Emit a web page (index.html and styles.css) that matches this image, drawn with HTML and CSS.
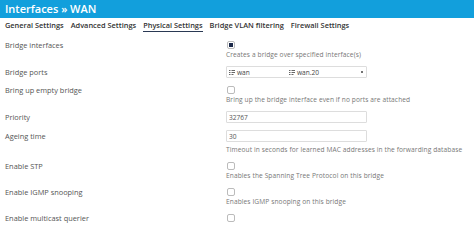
FILE: index.html
```html
<!DOCTYPE html>
<html lang="en">
<head>
    <meta charset="UTF-8">
    <meta name="viewport" content="width=device-width, initial-scale=1.0">
    <title>Interfaces » WAN</title>
    <link rel="stylesheet" href="styles.css">
</head>
<body>
    <div class="title-bar">Interfaces » WAN</div>

    <nav class="tabs">
        <span class="tab">General Settings</span>
        <span class="tab">Advanced Settings</span>
        <span class="tab active">Physical Settings</span>
        <span class="tab">Bridge VLAN filtering</span>
        <span class="tab">Firewall Settings</span>
    </nav>

    <form class="settings">
        <div class="field check-row">
            <label class="label">Bridge interfaces</label>
            <span class="checkbox checked"></span>
            <div class="desc">Creates a bridge over specified interface(s)</div>
        </div>

        <div class="field input-row">
            <label class="label">Bridge ports</label>
            <div class="multi">
                <span class="chip"><svg width="6" height="5" viewBox="0 0 6 5"><path d="M0 0.5h1.5M2.5 0.5h3.5M0 2.5h1.5M2.5 2.5h3.5M0 4.5h1.5M2.5 4.5h2" stroke="#666" stroke-width="1"/></svg>wan</span>
                <span class="chip"><svg width="6" height="5" viewBox="0 0 6 5"><path d="M0 0.5h1.5M2.5 0.5h3.5M0 2.5h1.5M2.5 2.5h3.5M0 4.5h1.5M2.5 4.5h2" stroke="#666" stroke-width="1"/></svg>wan.20</span>
                <span class="caret"></span>
            </div>
        </div>

        <div class="field check-row">
            <label class="label">Bring up empty bridge</label>
            <span class="checkbox"></span>
            <div class="desc">Bring up the bridge interface even if no ports are attached</div>
        </div>

        <div class="field input-row">
            <label class="label">Priority</label>
            <input class="text" type="text" value="32767">
        </div>

        <div class="field input-row">
            <label class="label">Ageing time</label>
            <input class="text" type="text" value="30">
            <div class="desc">Timeout in seconds for learned MAC addresses in the forwarding database</div>
        </div>

        <div class="field check-row">
            <label class="label">Enable STP</label>
            <span class="checkbox"></span>
            <div class="desc">Enables the Spanning Tree Protocol on this bridge</div>
        </div>

        <div class="field check-row">
            <label class="label">Enable IGMP snooping</label>
            <span class="checkbox"></span>
            <div class="desc">Enables IGMP snooping on this bridge</div>
        </div>

        <div class="field check-row">
            <label class="label">Enable multicast querier</label>
            <span class="checkbox"></span>
        </div>
    </form>
</body>
</html>
```

FILE: styles.css
```css
body {
    margin: 0;
    font-family: "Open Sans", "DejaVu Sans", sans-serif;
    color: #444;
    background: #fff;
}
.title-bar {
    height: 18px;
    line-height: 18px;
    padding-left: 5px;
    background-color: #129fdc;
    color: #fff;
    font-size: 11px;
    font-weight: 600;
}
.tabs {
    display: flex;
    gap: 7px;
    padding: 2px 5px 0;
    height: 12px;
}
.tab {
    font-size: 7.4px;
    font-weight: 600;
    color: #333;
    line-height: 10px;
    white-space: nowrap;
}
.tab.active {
    border-bottom: 1px solid #2a3954;
}
.settings {
    padding: 8px 0 0 5px;
}
.field {
    display: grid;
    grid-template-columns: 221px 1fr;
    align-items: center;
    margin-bottom: 7px;
}
.check-row {
    grid-template-rows: 10px auto;
}
.input-row {
    grid-template-rows: 12px auto;
}
.label {
    font-size: 7.4px;
    line-height: 8px;
    color: #555;
    white-space: nowrap;
}
.desc {
    grid-column: 2;
    font-size: 6.6px;
    letter-spacing: 0.1px;
    color: #777;
    line-height: 9px;
    white-space: nowrap;
}
.input-row .desc {
    margin-top: 3px;
}
.checkbox {
    display: block;
    box-sizing: border-box;
    width: 8px;
    height: 8px;
    margin-left: 1px;
    border: 1px solid #bbb;
    border-radius: 2px;
    position: relative;
}
.checkbox.checked::after {
    content: "";
    position: absolute;
    left: 1px;
    top: 1px;
    width: 4px;
    height: 4px;
    background: #1c2a4a;
}
.multi,
.text {
    box-sizing: border-box;
    width: 141px;
    height: 12px;
    border: 1px solid #ddd;
    border-radius: 1px;
}
.multi {
    display: flex;
    align-items: center;
    padding: 0 3px 0 2px;
    position: relative;
}
.chip {
    display: flex;
    align-items: center;
    gap: 2px;
    width: 60px;
    font-size: 6.6px;
    color: #444;
}
.caret {
    margin-left: auto;
    width: 2px;
    height: 2px;
    background: #444;
    border-radius: 1px;
}
.text {
    padding: 0 2px;
    font-family: inherit;
    font-size: 6.6px;
    color: #555;
    outline: none;
}
```
